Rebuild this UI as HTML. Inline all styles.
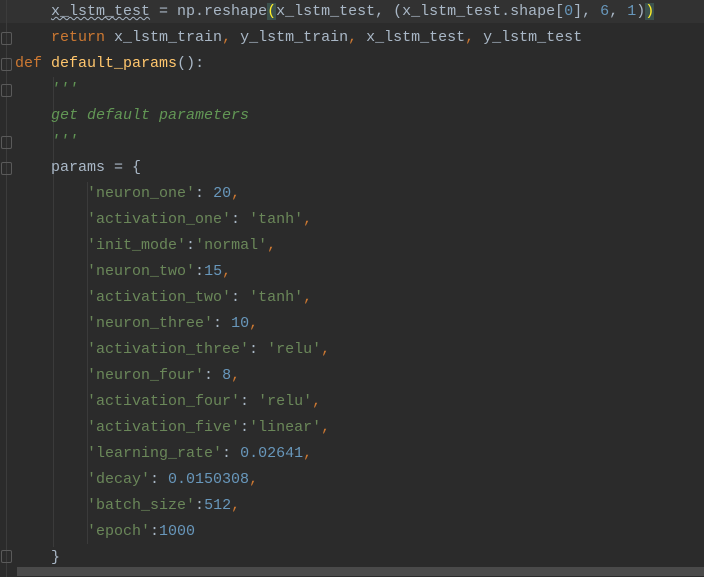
<!DOCTYPE html><html><head><style>
body{margin:0;width:704px;height:577px;background:#2b2b2b;overflow:hidden;position:relative;font-family:"Liberation Mono",monospace;font-size:15px;color:#a9b7c6}
.code{position:absolute;left:15px;top:-1px;white-space:pre;line-height:26px}
.cur{position:absolute;left:0;top:0;width:704px;height:23px;background:#323232}
.k{color:#cc7832}.f{color:#ffc66d}.s{color:#6a8759}.n{color:#6897bb}.d{color:#629755;font-style:italic}
.u{text-decoration:underline wavy #a9b7c6 1px}
.gut{position:absolute;left:6px;top:0;width:1px;height:577px;background:#3c3c3c}
.ig{position:absolute;width:1px;background:#3b3b3b}
.sb{position:absolute;left:17px;top:567px;width:687px;height:9px;background:#4a4a4a}
.fold{position:absolute;left:1px;width:11px;height:13px;border:1px solid #5a5a5a;box-sizing:border-box;border-radius:2px}
</style></head><body>
<div class="cur"></div>
<div class="gut"></div>
<div class="ig" style="left:53px;top:77px;height:470px"></div>
<div class="ig" style="left:87px;top:182px;height:362px"></div>
<div class="fold" style="top:32px"></div>
<div class="fold" style="top:58px"></div>
<div class="fold" style="top:84px"></div>
<div class="fold" style="top:136px"></div>
<div class="fold" style="top:162px"></div>
<div class="fold" style="top:550px"></div>
<div class="code">    <span class="u">x_lstm_test</span> = np.reshape<span style="background:#3b514d;color:#ffef28">(</span>x_lstm_test, (x_lstm_test.shape[<span class="n">0</span>], <span class="n">6</span>, <span class="n">1</span>)<span style="background:#3b514d;color:#ffef28">)</span>
    <span class="k">return</span> x_lstm_train<span class="k">,</span> y_lstm_train<span class="k">,</span> x_lstm_test<span class="k">,</span> y_lstm_test
<span class="k">def</span> <span class="f">default_params</span>():
    <span class="d">'''</span>
    <span class="d">get default parameters</span>
    <span class="d">'''</span>
    params = {
        <span class="s">'neuron_one'</span>: <span class="n">20</span><span class="k">,</span>
        <span class="s">'activation_one'</span>: <span class="s">'tanh'</span><span class="k">,</span>
        <span class="s">'init_mode'</span>:<span class="s">'normal'</span><span class="k">,</span>
        <span class="s">'neuron_two'</span>:<span class="n">15</span><span class="k">,</span>
        <span class="s">'activation_two'</span>: <span class="s">'tanh'</span><span class="k">,</span>
        <span class="s">'neuron_three'</span>: <span class="n">10</span><span class="k">,</span>
        <span class="s">'activation_three'</span>: <span class="s">'relu'</span><span class="k">,</span>
        <span class="s">'neuron_four'</span>: <span class="n">8</span><span class="k">,</span>
        <span class="s">'activation_four'</span>: <span class="s">'relu'</span><span class="k">,</span>
        <span class="s">'activation_five'</span>:<span class="s">'linear'</span><span class="k">,</span>
        <span class="s">'learning_rate'</span>: <span class="n">0.02641</span><span class="k">,</span>
        <span class="s">'decay'</span>: <span class="n">0.0150308</span><span class="k">,</span>
        <span class="s">'batch_size'</span>:<span class="n">512</span><span class="k">,</span>
        <span class="s">'epoch'</span>:<span class="n">1000</span>
    }</div>
<div class="sb"></div>
</body></html>
